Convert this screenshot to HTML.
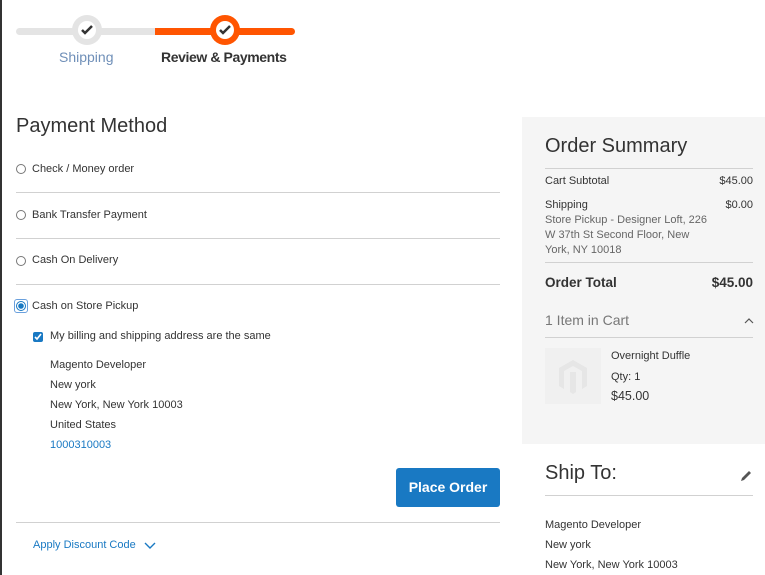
<!DOCTYPE html>
<html><head><meta charset="utf-8"><style>
*{margin:0;padding:0;box-sizing:border-box}
body{width:765px;height:575px;overflow:hidden;background:#fff;font-family:"Liberation Sans",sans-serif;color:#333;position:relative;font-size:11px}
.a{position:absolute;white-space:nowrap}
.hr{position:absolute;height:1px;background:#d1d1d1}
.radio{position:absolute;width:10px;height:10px;border:1px solid #777;border-radius:50%;background:#fff}
</style></head><body>
<div class="a" style="left:0;top:0;width:2px;height:575px;background:#333"></div>
<div class="a" style="left:16px;top:28px;width:140px;height:7px;background:#e4e4e4;border-radius:4px 0 0 4px"></div>
<div class="a" style="left:155px;top:28px;width:140px;height:7px;background:#ff5501;border-radius:0 4px 4px 0"></div>
<div class="a" style="left:72px;top:15px;width:30px;height:30px;border-radius:50%;background:#e4e4e4"></div>
<div class="a" style="left:78px;top:21px;width:18px;height:18px;border-radius:50%;background:#fff"></div>
<div class="a" style="left:210px;top:15px;width:30px;height:30px;border-radius:50%;background:#ff5501"></div>
<div class="a" style="left:216px;top:21px;width:18px;height:18px;border-radius:50%;background:#fff"></div>
<svg class="a" style="left:80px;top:23px" width="14" height="14"><path d="M2 7l3 3 7-7" stroke="#333" stroke-width="2.5" fill="none"/></svg>
<svg class="a" style="left:218px;top:23px" width="14" height="14"><path d="M2 7l3 3 7-7" stroke="#333" stroke-width="2.5" fill="none"/></svg>
<div class="a" style="left:59px;top:49px;font-size:14px;color:#6f8fb8">Shipping</div>
<div class="a" style="left:161px;top:49px;font-size:14px;color:#333;font-weight:bold;letter-spacing:-0.4px">Review &amp; Payments</div>
<div class="a" style="left:16px;top:115px;font-size:20px;color:#333">Payment Method</div>
<div class="radio" style="left:16px;top:164px"></div><div class="a" style="left:32px;top:163px">Check / Money order</div>
<div class="hr" style="left:16px;top:192px;width:484px"></div>
<div class="radio" style="left:16px;top:210px"></div><div class="a" style="left:32px;top:209px">Bank Transfer Payment</div>
<div class="hr" style="left:16px;top:238px;width:484px"></div>
<div class="radio" style="left:16px;top:256px"></div><div class="a" style="left:32px;top:254px">Cash On Delivery</div>
<div class="hr" style="left:16px;top:284px;width:484px"></div>
<div class="a" style="left:14px;top:299px;width:14px;height:14px;border:1px solid #6aa0dd;border-radius:3px"></div>
<svg class="a" style="left:16px;top:301px" width="10" height="10"><circle cx="5" cy="5" r="4.5" fill="#fff" stroke="#1979c3"/><circle cx="5" cy="5" r="2.8" fill="#1979c3"/></svg>
<div class="a" style="left:32px;top:300px">Cash on Store Pickup</div>
<div class="a" style="left:33px;top:332px;width:10px;height:10px;background:#1979c3;border-radius:2px"></div>
<svg class="a" style="left:33px;top:332px" width="10" height="10"><path d="M2 5l2 2 4-5" stroke="#fff" stroke-width="1.6" fill="none"/></svg>
<div class="a" style="left:50px;top:330px">My billing and shipping address are the same</div>
<div class="a" style="left:50px;top:355px;line-height:20px">Magento Developer<br>New york<br>New York, New York 10003<br>United States<br><span style="color:#1979c3">1000310003</span></div>
<div class="a" style="left:396px;top:468px;width:104px;height:39px;background:#1979c3;border-radius:3px;color:#fff;font-weight:bold;font-size:14px;text-align:center;line-height:39px">Place Order</div>
<div class="hr" style="left:16px;top:522px;width:484px"></div>
<div class="a" style="left:33px;top:539px;color:#1979c3">Apply Discount Code</div>
<svg class="a" style="left:144px;top:542px" width="12" height="8"><path d="M1 1l5 5 5-5" stroke="#1979c3" stroke-width="1.4" fill="none"/></svg>
<div class="a" style="left:522px;top:117px;width:243px;height:327px;background:#f5f5f5"></div>
<div class="a" style="left:545px;top:135px;font-size:20px;color:#333">Order Summary</div>
<div class="hr" style="left:545px;top:168px;width:208px"></div>
<div class="a" style="left:545px;top:175px">Cart Subtotal</div><div class="a" style="right:12px;top:175px">$45.00</div>
<div class="a" style="left:545px;top:199px">Shipping</div><div class="a" style="right:12px;top:199px">$0.00</div>
<div class="a" style="left:545px;top:213px;line-height:15px;color:#666">Store Pickup - Designer Loft, 226<br>W 37th St Second Floor, New<br>York, NY 10018</div>
<div class="hr" style="left:545px;top:262px;width:208px"></div>
<div class="a" style="left:545px;top:275px;font-size:13.5px;font-weight:bold">Order Total</div>
<div class="a" style="right:12px;top:275px;font-size:13.5px;font-weight:bold">$45.00</div>
<div class="a" style="left:545px;top:312px;font-size:14px;color:#777">1 Item in Cart</div>
<svg class="a" style="left:744px;top:318px" width="10" height="6"><path d="M1 5l4-4 4 4" stroke="#555" stroke-width="1.2" fill="none"/></svg>
<div class="hr" style="left:545px;top:337px;width:208px"></div>
<div class="a" style="left:545px;top:348px;width:56px;height:56px;background:#f0f0f0"></div>
<svg class="a" style="left:553px;top:356px" width="40" height="40"><path d="M20 4L6 12v18l5 3V15l9-5 9 5v18l5-3V12z M17 16v20l3 2 3-2V16" fill="#e6e6e6"/></svg>
<div class="a" style="left:611px;top:350px">Overnight Duffle</div>
<div class="a" style="left:611px;top:371px">Qty: 1</div>
<div class="a" style="left:611px;top:389px;font-size:12.5px">$45.00</div>
<div class="a" style="left:545px;top:462px;font-size:20px">Ship To:</div>
<svg class="a" style="left:739px;top:469px" width="14" height="14"><path d="M2 12l1-3 7-7 2 2-7 7z" fill="#555"/></svg>
<div class="hr" style="left:545px;top:495px;width:208px"></div>
<div class="a" style="left:545px;top:515px;line-height:20px">Magento Developer<br>New york<br>New York, New York 10003</div>
</body></html>
